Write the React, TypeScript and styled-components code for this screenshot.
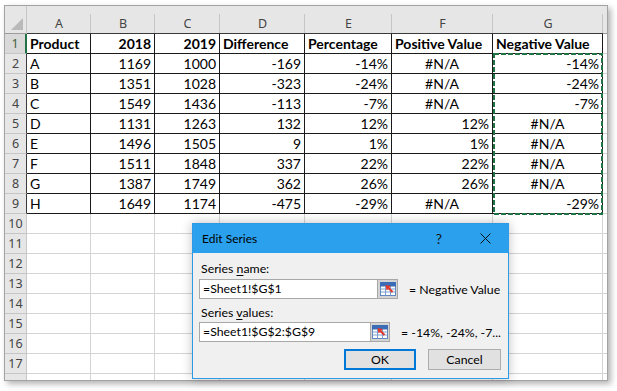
import React from 'react';
import styled, { createGlobalStyle } from 'styled-components';

const GlobalStyle = createGlobalStyle`
  html, body { margin: 0; padding: 0; background: #ffffff; }
  body { width: 617px; height: 391px; overflow: hidden; }
`;

const Frame = styled.div`
  padding: 5px 0 0 4px;
`;

const Window = styled.div`
  position: relative;
  width: 604px;
  height: 376px;
  box-sizing: border-box;
  border: 1px solid #a3a3a3;
  background: #ffffff;
  box-shadow: 3px 3px 6px rgba(0, 0, 0, 0.3);
`;

const Clip = styled.div`
  width: 100%;
  height: 100%;
  overflow: hidden;
`;

const Sheet = styled.div`
  display: grid;
  grid-template-columns: 22px 64px 64px 65px 85px 87px 101px 110px 1fr;
  grid-template-rows: 28px;
  grid-auto-rows: 20px;
`;

const HeadBase = styled.div`
  box-sizing: border-box;
  background: #e6e6e6;
  color: #444444;
  font-family: "Noto Sans", "Open Sans", sans-serif;
  font-size: 12.5px;
`;

const Corner = styled(HeadBase)`
  position: relative;
  border-bottom: 1px solid #9b9b9b;
  border-right: 1px solid #c6c6c6;
  &::after {
    content: "";
    position: absolute;
    right: 3px;
    bottom: 3px;
    width: 0;
    height: 0;
    border-left: 12px solid transparent;
    border-bottom: 12px solid #b9b9b9;
  }
`;

const ColHead = styled(HeadBase)<{ $table: boolean }>`
  position: relative;
  border-bottom: 1px solid ${(p) => (p.$table ? '#3a3a3a' : '#9b9b9b')};
  padding-top: 8px;
  line-height: 19px;
  text-align: center;
  &::after {
    content: "";
    position: absolute;
    right: 0;
    top: 8px;
    bottom: 0;
    width: 1px;
    background: #c6c6c6;
  }
`;

const RowHead = styled(HeadBase)<{ $table: boolean; $active: boolean }>`
  border-bottom: 1px solid #c6c6c6;
  border-right: ${(p) =>
    p.$active ? '2px solid #217346' : p.$table ? '1px solid #3a3a3a' : '1px solid #c6c6c6'};
  background: ${(p) => (p.$active ? '#d9d9d9' : '#e6e6e6')};
  color: ${(p) => (p.$active ? '#3f5f3f' : '#444444')};
  text-align: center;
  line-height: 19px;
`;

const Cell = styled.div<{ $strong: boolean; $align: 'left' | 'right' | 'center'; $bold?: boolean }>`
  box-sizing: border-box;
  border-right: 1px solid ${(p) => (p.$strong ? '#1a1a1a' : '#d4d4d4')};
  border-bottom: 1px solid ${(p) => (p.$strong ? '#1a1a1a' : '#d4d4d4')};
  font-family: Lato, "Liberation Sans", sans-serif;
  font-size: 14px;
  font-weight: ${(p) => (p.$bold ? 700 : 400)};
  color: #000000;
  line-height: 20px;
  padding: 0 3px 0 3px;
  text-align: ${(p) => p.$align};
  white-space: nowrap;
  overflow: hidden;
`;

const Marquee = styled.svg`
  position: absolute;
  left: 488px;
  top: 47px;
  overflow: visible;
`;

const Dialog = styled.div`
  position: absolute;
  left: 187px;
  top: 217px;
  width: 317px;
  height: 156px;
  box-sizing: border-box;
  border: 1px solid #2b9be6;
  background: #f0f0f0;
  display: flex;
  flex-direction: column;
  box-shadow: 0 0 10px rgba(0, 0, 0, 0.25);
  font-family: Lato, "Noto Sans", sans-serif;
  font-size: 12.3px;
  color: #000000;
`;

const TitleBar = styled.div`
  height: 29px;
  background: #2ba1ee;
  display: flex;
  align-items: center;
  padding-left: 9px;
`;

const Title = styled.div`
  flex: 1;
  font-size: 12px;
  color: #000;
`;

const TitleButton = styled.div`
  width: 46px;
  height: 29px;
  display: flex;
  align-items: center;
  justify-content: center;
  font-size: 14px;
  color: #111;
`;

const Body = styled.div`
  flex: 1;
  display: flex;
  flex-direction: column;
  padding: 8px 7px 0 6px;
`;

const Label = styled.div<{ $gap: number }>`
  margin-left: 2px;
  margin-top: ${(p) => p.$gap}px;
  line-height: 16px;
  height: 16px;
`;

const Key = styled.span`
  text-decoration: underline;
  text-underline-offset: 2px;
`;

const FieldRow = styled.div<{ $gap: number }>`
  display: flex;
  align-items: center;
  margin-top: ${(p) => p.$gap}px;
`;

const Input = styled.div`
  box-sizing: border-box;
  width: 178px;
  height: 20px;
  border: 1px solid #a8a8a8;
  border-right: none;
  background: #ffffff;
  padding-left: 3px;
  line-height: 18px;
  white-space: nowrap;
`;

const RefButton = styled.div`
  box-sizing: border-box;
  width: 21px;
  height: 20px;
  border: 1px solid #a8a8a8;
  background: #d4d4d4;
  display: flex;
  align-items: center;
  justify-content: center;
`;

const Preview = styled.div`
  margin-left: 11px;
  white-space: nowrap;
`;

const Buttons = styled.div`
  display: flex;
  justify-content: flex-end;
  gap: 12px;
  margin-top: 7px;
`;

const Button = styled.div<{ $primary?: boolean }>`
  box-sizing: border-box;
  width: ${(p) => (p.$primary ? 72 : 73)}px;
  height: 21px;
  border: ${(p) => (p.$primary ? '2px solid #0078d7' : '1px solid #adadad')};
  background: #e1e1e1;
  display: flex;
  align-items: center;
  justify-content: center;
`;

const RefIcon = () => (
  <svg width="16" height="14" viewBox="0 0 16 14">
    <rect x="0.5" y="0.5" width="15" height="13" fill="#ffffff" stroke="#5f86c0" />
    <rect x="0.5" y="0.5" width="15" height="3.5" fill="#3a6db5" stroke="#3a6db5" />
    <line x1="0.5" y1="7" x2="15.5" y2="7" stroke="#7c9fd0" />
    <line x1="0.5" y1="10" x2="15.5" y2="10" stroke="#7c9fd0" />
    <line x1="5.5" y1="4" x2="5.5" y2="13.5" stroke="#7c9fd0" />
    <line x1="10.5" y1="4" x2="10.5" y2="13.5" stroke="#7c9fd0" />
    <line x1="12.5" y1="10" x2="8.5" y2="6" stroke="#e2372b" strokeWidth="2.2" />
    <polygon points="5.5,3 11,4 6.5,8.5" fill="#e2372b" />
  </svg>
);

const CloseIcon = () => (
  <svg width="11" height="11" viewBox="0 0 11 11">
    <path d="M0.5 0.5 L10.5 10.5 M10.5 0.5 L0.5 10.5" stroke="#111" strokeWidth="1" />
  </svg>
);

type Align = 'left' | 'right' | 'center';

const header: { v: string; a: Align }[] = [
  { v: 'Product', a: 'left' },
  { v: '2018', a: 'right' },
  { v: '2019', a: 'right' },
  { v: 'Difference', a: 'left' },
  { v: 'Percentage', a: 'left' },
  { v: 'Positive Value', a: 'left' },
  { v: 'Negative Value', a: 'left' },
];

const data: (string | number)[][] = [
  ['A', 1169, 1000, -169, '-14%', '#N/A', '-14%'],
  ['B', 1351, 1028, -323, '-24%', '#N/A', '-24%'],
  ['C', 1549, 1436, -113, '-7%', '#N/A', '-7%'],
  ['D', 1131, 1263, 132, '12%', '12%', '#N/A'],
  ['E', 1496, 1505, 9, '1%', '1%', '#N/A'],
  ['F', 1511, 1848, 337, '22%', '22%', '#N/A'],
  ['G', 1387, 1749, 362, '26%', '26%', '#N/A'],
  ['H', 1649, 1174, -475, '-29%', '#N/A', '-29%'],
];

const cols = ['A', 'B', 'C', 'D', 'E', 'F', 'G', ''];

const alignOf = (v: string | number, c: number): Align => {
  if (v === '#N/A') return 'center';
  if (c === 0) return 'left';
  return 'right';
};

export default function App() {
  const rows: React.ReactNode[] = [];
  for (let r = 1; r <= 18; r++) {
    const inTable = r <= 9;
    rows.push(
      <RowHead key={`h${r}`} $table={inTable} $active={r === 1}>
        {r <= 17 ? r : null}
      </RowHead>
    );
    for (let c = 0; c < 8; c++) {
      const strong = inTable && c < 7;
      let content: React.ReactNode = null;
      let align: Align = 'left';
      let bold = false;
      if (r === 1 && c < 7) {
        content = header[c].v;
        align = header[c].a;
        bold = true;
      } else if (r >= 2 && r <= 9 && c < 7) {
        const v = data[r - 2][c];
        content = v;
        align = alignOf(v, c);
      }
      rows.push(
        <Cell key={`c${r}-${c}`} $strong={strong} $align={align} $bold={bold}>
          {content}
        </Cell>
      );
    }
  }

  return (
    <>
      <GlobalStyle />
      <Frame>
        <Window>
          <Clip>
            <Sheet>
              <Corner />
              {cols.map((c, i) => (
                <ColHead key={`col${i}`} $table={i < 7}>
                  {c}
                </ColHead>
              ))}
              {rows}
            </Sheet>
          </Clip>
          <Marquee width="110" height="162">
            <rect
              x="1"
              y="1"
              width="108"
              height="160"
              fill="none"
              stroke="#217346"
              strokeWidth="2"
              strokeDasharray="5 2"
              shapeRendering="crispEdges"
            />
          </Marquee>
          <Dialog>
            <TitleBar>
              <Title>Edit Series</Title>
              <TitleButton>?</TitleButton>
              <TitleButton>
                <CloseIcon />
              </TitleButton>
            </TitleBar>
            <Body>
              <Label $gap={0}>
                Series <Key>n</Key>ame:
              </Label>
              <FieldRow $gap={2}>
                <Input>=Sheet1!$G$1</Input>
                <RefButton>
                  <RefIcon />
                </RefButton>
                <Preview>= Negative Value</Preview>
              </FieldRow>
              <Label $gap={6}>
                Series <Key>v</Key>alues:
              </Label>
              <FieldRow $gap={1}>
                <Input>=Sheet1!$G$2:$G$9</Input>
                <RefButton>
                  <RefIcon />
                </RefButton>
                <Preview>= -14%, -24%, -7...</Preview>
              </FieldRow>
              <Buttons>
                <Button $primary>OK</Button>
                <Button>Cancel</Button>
              </Buttons>
            </Body>
          </Dialog>
        </Window>
      </Frame>
    </>
  );
}
